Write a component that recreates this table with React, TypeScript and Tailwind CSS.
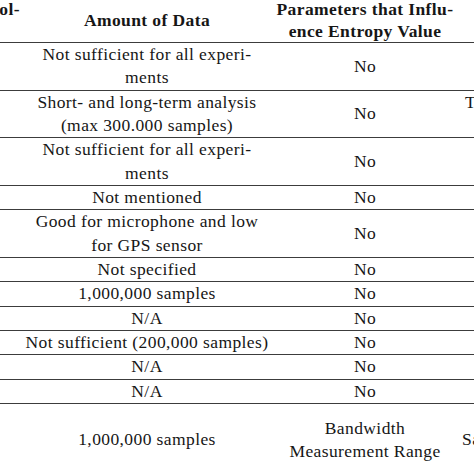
const rows: { amount: string[]; param: string[]; extra?: string }[] = [
  { amount: ["Not sufficient for all experi-", "ments"], param: ["No"] },
  { amount: ["Short- and long-term analysis", "(max 300.000 samples)"], param: ["No"], extra: "Temporal" },
  { amount: ["Not sufficient for all experi-", "ments"], param: ["No"] },
  { amount: ["Not mentioned"], param: ["No"] },
  { amount: ["Good for microphone and low", "for GPS sensor"], param: ["No"] },
  { amount: ["Not specified"], param: ["No"] },
  { amount: ["1,000,000 samples"], param: ["No"] },
  { amount: ["N/A"], param: ["No"] },
  { amount: ["Not sufficient (200,000 samples)"], param: ["No"] },
  { amount: ["N/A"], param: ["No"] },
  { amount: ["N/A"], param: ["No"] },
];

const cols = "grid grid-cols-[86px_242px_194px_120px]";

export default function App() {
  return (
    <div
      className="w-[474px] h-[474px] overflow-hidden bg-white text-[#161616] text-[17.5px] tracking-[0.4px]"
      style={{ fontFamily: '"Liberation Serif", "Times New Roman", serif' }}
    >
      <div className="ml-[-60px] mt-[-2px] w-max">
        {/* header */}
        <div className={`${cols} h-[45px] border-b border-[#3c3c3c] font-bold leading-[22px]`}>
          <div className="flex items-start justify-end pr-[6px]">Tool-</div>
          <div className="flex items-center justify-center text-center">Amount of Data</div>
          <div className="flex flex-col items-center justify-center text-center">
            <span>Parameters that Influ-</span>
            <span>ence Entropy Value</span>
          </div>
          <div />
        </div>

        {rows.map((r, i) => (
          <div key={i} className={`${cols} border-b border-[#3c3c3c] leading-[23.33px]`}>
            <div />
            <div className="flex flex-col items-center justify-center text-center whitespace-nowrap">
              {r.amount.map((l, j) => (
                <span key={j}>{l}</span>
              ))}
            </div>
            <div className="flex flex-col items-center justify-center text-center">
              {r.param.map((l, j) => (
                <span key={j}>{l}</span>
              ))}
            </div>
            <div className="flex items-start pl-[3px] whitespace-nowrap">{r.extra ?? ""}</div>
          </div>
        ))}

        {/* last row */}
        <div className={`${cols} leading-[23px] py-[13px]`}>
          <div />
          <div className="flex items-center justify-center text-center">1,000,000 samples</div>
          <div className="flex flex-col items-center justify-center text-center">
            <span>Bandwidth</span>
            <span>Measurement Range</span>
          </div>
          <div className="flex items-center whitespace-nowrap">Sampling</div>
        </div>
      </div>
    </div>
  );
}
